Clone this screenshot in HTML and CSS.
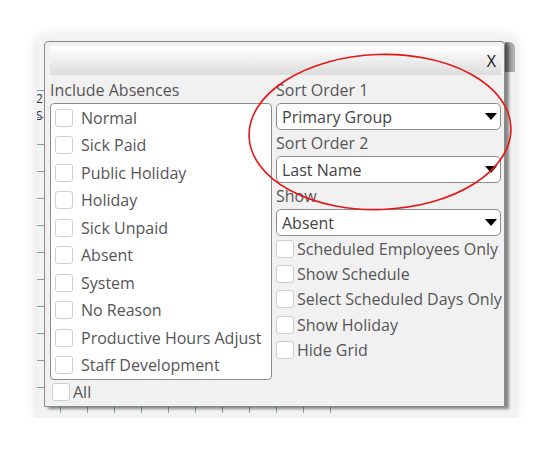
FILE: index.html
```html
<!DOCTYPE html>
<html lang="en">
<head>
    <meta charset="UTF-8">
    <meta name="viewport" content="width=device-width, initial-scale=1.0">
    <title>Report Options</title>
    <link rel="stylesheet" href="styles.css">
</head>
<body>
    <div class="backdrop">
        <div class="backdropHead">
            <div class="backdropBar"></div>
        </div>
        <div class="grid">
            <div class="gridText">2</div>
            <div class="gridText">S</div>
        </div>
    </div>

    <div class="dialog">
        <div class="titleBar">
            <span class="close">X</span>
        </div>
        <div class="dialogBody">
            <div class="colLeft">
                <div class="label">Include Absences</div>
                <div class="absenceBox">
                    <div class="absRow"><span class="check"></span>Normal</div>
                    <div class="absRow"><span class="check"></span>Sick Paid</div>
                    <div class="absRow"><span class="check"></span>Public Holiday</div>
                    <div class="absRow"><span class="check"></span>Holiday</div>
                    <div class="absRow"><span class="check"></span>Sick Unpaid</div>
                    <div class="absRow"><span class="check"></span>Absent</div>
                    <div class="absRow"><span class="check"></span>System</div>
                    <div class="absRow"><span class="check"></span>No Reason</div>
                    <div class="absRow"><span class="check"></span>Productive Hours Adjust</div>
                    <div class="absRow"><span class="check"></span>Staff Development</div>
                </div>
                <div class="allRow"><span class="check"></span>All</div>
            </div>
            <div class="colRight">
                <div class="label">Sort Order 1</div>
                <div class="select"><span>Primary Group</span><span class="arrow"></span></div>
                <div class="label label--next">Sort Order 2</div>
                <div class="select"><span>Last Name</span><span class="arrow"></span></div>
                <div class="label label--next">Show</div>
                <div class="select"><span>Absent</span><span class="arrow"></span></div>
                <div class="options">
                    <div class="optRow"><span class="check"></span>Scheduled Employees Only</div>
                    <div class="optRow"><span class="check"></span>Show Schedule</div>
                    <div class="optRow"><span class="check"></span>Select Scheduled Days Only</div>
                    <div class="optRow"><span class="check"></span>Show Holiday</div>
                    <div class="optRow"><span class="check"></span>Hide Grid</div>
                </div>
            </div>
        </div>
    </div>

    <svg class="marker" width="555" height="455" viewBox="0 0 555 455">
        <ellipse cx="380" cy="132" rx="131" ry="77.5" transform="rotate(-2 380 132)" fill="none" stroke="#e51616" stroke-width="1.6"/>
    </svg>
</body>
</html>
```

FILE: styles.css
```css
* {
    box-sizing: border-box;
}
body {
    margin: 0;
    padding: 35px 0 0 37px;
    background: #fff;
    font-family: 'Open Sans', 'Liberation Sans', sans-serif;
    font-size: 16px;
    color: #555;
}
.backdrop {
    width: 478px;
    height: 383px;
    background: #f3f3f3;
    border-radius: 8px;
    box-shadow: 0 2px 14px rgba(0, 0, 0, 0.14);
    overflow: hidden;
}
.backdropHead {
    height: 37px;
    padding-top: 7px;
    display: flex;
    justify-content: flex-end;
}
.backdropBar {
    width: 10px;
    height: 30px;
    background: linear-gradient(90deg, #8f8f8f, #b5b5b5);
    border-radius: 0 6px 0 0;
}
.grid {
    margin-top: 18px;
    width: 294px;
    height: 323px;
    background-image:
        repeating-linear-gradient(90deg, transparent 0 23px, #79a6a8 23px 24px, transparent 24px 27px),
        repeating-linear-gradient(180deg, #79a6a8 0 1px, transparent 1px 27px);
}
.gridText {
    font-size: 12px;
    line-height: 17px;
    height: 17px;
    color: #333;
    margin-left: -1px;
}

/* dialog */
.dialog {
    position: absolute;
    left: 44px;
    top: 41px;
    width: 461px;
    height: 366px;
    padding: 4px 3px 0 5px;
    background: #f1f1f1;
    border: 1px solid #8a8a8a;
    border-radius: 4px 4px 0 0;
    box-shadow: 4px 2px 3px rgba(0, 0, 0, 0.45);
}
.titleBar {
    height: 29px;
    display: flex;
    justify-content: flex-end;
    align-items: center;
    background: linear-gradient(180deg, #fff, #dcdcdc);
}
.close {
    color: #111;
    font-size: 16px;
    padding-right: 5px;
    line-height: 20px;
}
.dialogBody {
    display: flex;
    gap: 4px;
    margin-top: 4px;
}
.colLeft {
    width: 222px;
}
.colRight {
    width: 225px;
}
.label {
    height: 24px;
    line-height: 22px;
    white-space: nowrap;
}
.label--next {
    height: 26px;
    line-height: 26px;
}
.absenceBox {
    background: #fff;
    border: 1px solid #8c8c8c;
    border-radius: 4px;
    padding-left: 4px;
}
.absRow {
    height: 27.5px;
    display: flex;
    align-items: center;
    gap: 8px;
    white-space: nowrap;
}
.check {
    flex: none;
    width: 18px;
    height: 18px;
    background: #fff;
    border: 1px solid #cfcfcf;
    border-radius: 3px;
}
.allRow {
    display: flex;
    align-items: center;
    gap: 3px;
    padding: 3px 0 0 2px;
    line-height: 18px;
}
.select {
    height: 27px;
    display: flex;
    justify-content: space-between;
    align-items: center;
    padding: 0 3px 0 5px;
    background: #fff;
    border: 1px solid #8c8c8c;
    border-radius: 5px;
    color: #444;
}
.arrow {
    width: 0;
    height: 0;
    border-left: 6.5px solid transparent;
    border-right: 6.5px solid transparent;
    border-top: 7px solid #000;
}
.options {
    padding-top: 0.5px;
}
.optRow {
    height: 25.2px;
    display: flex;
    align-items: center;
    gap: 3px;
    white-space: nowrap;
}
.marker {
    position: absolute;
    left: 0;
    top: 0;
    pointer-events: none;
}
```
